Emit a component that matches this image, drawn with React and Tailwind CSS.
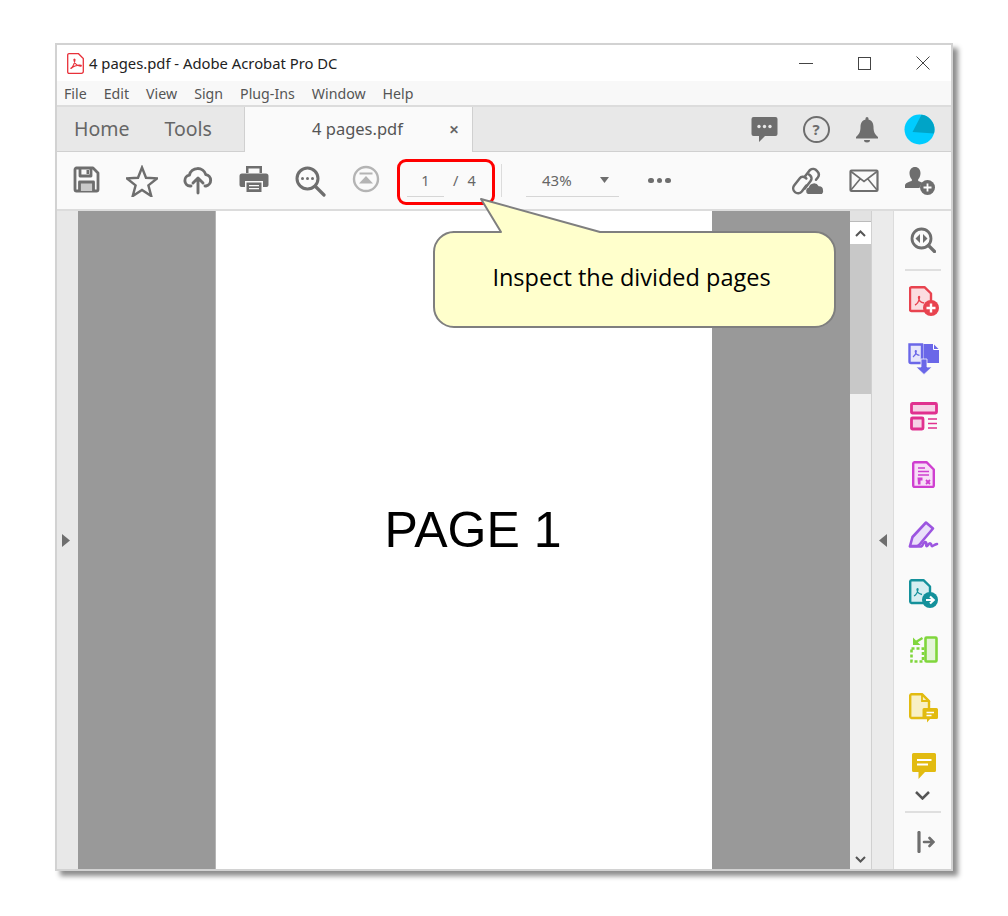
import React from 'react';

const gray = '#6e6e6e';

// toolbar icons
const Save = () => (
  <svg width="28" height="28" viewBox="0 0 28 28" fill="none" stroke={gray} strokeWidth="2.8" strokeLinejoin="round">
    <path d="M3 4.5a1.5 1.5 0 0 1 1.5-1.5H21l5 5v16.5a1.5 1.5 0 0 1-1.5 1.5h-20A1.5 1.5 0 0 1 3 24.5z" />
    <path d="M8 3v8h11V3" />
    <path d="M7.5 26v-9h14v9" fill="#c9c9c9" />
    <rect x="14.5" y="5" width="2.5" height="4" fill={gray} stroke="none" />
  </svg>
);
const Star = () => (
  <svg width="32" height="32" viewBox="0 0 32 32" fill="none" stroke={gray} strokeWidth="2.4" strokeLinejoin="miter">
    <path d="M16 2.5l4 10.3 11 .6-8.6 7 2.9 10.7L16 25l-9.3 6.1 2.9-10.7-8.6-7 11-.6z" />
  </svg>
);
const Upload = () => (
  <svg width="30" height="30" viewBox="0 0 30 30" fill="none" stroke={gray} strokeWidth="2.9" strokeLinecap="round" strokeLinejoin="round">
    <path d="M8 21H7a5.5 5.5 0 0 1-.6-10.9A8.5 8.5 0 0 1 22.8 9.6 5.8 5.8 0 0 1 23 21h-1" />
    <path d="M15 28V13.5M10 18l5-5 5 5" />
  </svg>
);
const Printer = () => (
  <svg width="30" height="28" viewBox="0 0 30 28" fill={gray}>
    <path d="M7 1h16v7h-2.5V3.5h-11V8H7z" />
    <path d="M3 8.5h24a2.5 2.5 0 0 1 2.5 2.5v9a2 2 0 0 1-2 2H24v-6H6v6H2.5a2 2 0 0 1-2-2v-9A2.5 2.5 0 0 1 3 8.5z" />
    <path d="M7.5 17.5h15V27h-15zM10 20v1.3h10V20zm0 3v1.3h10V23z" fillRule="evenodd" />
  </svg>
);
const ZoomDots = () => (
  <svg width="32" height="32" viewBox="0 0 32 32" fill="none" stroke={gray} strokeWidth="3" strokeLinecap="round">
    <circle cx="13.5" cy="13.5" r="10.5" />
    <path d="M21.5 21.5L30 30" strokeWidth="3.2" />
    <circle cx="8.5" cy="13.5" r="1.5" fill={gray} stroke="none" />
    <circle cx="13.5" cy="13.5" r="1.5" fill={gray} stroke="none" />
    <circle cx="18.5" cy="13.5" r="1.5" fill={gray} stroke="none" />
  </svg>
);
const ScrollTop = () => (
  <svg width="28" height="28" viewBox="0 0 28 28" fill="none">
    <circle cx="14" cy="14" r="12" stroke="#b4b4b4" strokeWidth="2.4" />
    <rect x="7.5" y="7.5" width="13" height="2" fill="#b4b4b4" />
    <path d="M14 11l7 7.5H7z" fill="#b4b4b4" />
  </svg>
);
const LinkCloud = () => (
  <svg width="32" height="30" viewBox="0 0 32 30" fill="none" stroke={gray} strokeWidth="2.5" strokeLinecap="round">
    <path d="M12.5 11l5.5-7a5 5 0 0 1 7 1l.3.3a4.8 4.8 0 0 1 .5 6.2l-1.8 2.2" />
    <path d="M17 8.5l1.2 1a4 4 0 0 1 .4 5.5l-5.8 7.5" />
    <path d="M14.3 19.5L9.8 25.5a4.8 4.8 0 0 1-6.8.6 5 5 0 0 1-.7-6.9l5.5-7a4 4 0 0 1 5.5-.6l1 .8" />
    <path d="M16 28a3.5 3.5 0 0 1 .8-6.5 5.3 5.3 0 0 1 9.9-1.2A4 4 0 0 1 31 24a3.9 3.9 0 0 1-1 4z" fill={gray} stroke="none" />
  </svg>
);
const Mail = () => (
  <svg width="30" height="24" viewBox="0 0 30 24" fill="none" stroke={gray} strokeWidth="2.2">
    <rect x="1.5" y="1.5" width="27" height="20.5" rx="1" />
    <path d="M2 2.5l13 10 13-10M2 21l9.5-11.5M28 21l-9.5-11.5" strokeWidth="1.6" />
  </svg>
);
const UserPlus = () => (
  <svg width="32" height="30" viewBox="0 0 32 30" fill={gray}>
    <path d="M11 1c3.3 0 5.5 2.7 5.5 6.2 0 2.6-1 4.7-2.3 6v1.8c2 .6 3.3 1.2 4.3 2a8.5 8.5 0 0 0-3 5H1v-2.5c0-2.3 3.5-3.7 6.8-4.5v-1.8C6.5 11.9 5.5 9.8 5.5 7.2 5.5 3.7 7.7 1 11 1z" />
    <circle cx="23.5" cy="21.5" r="7.5" />
    <path d="M23.5 17.5v8M19.5 21.5h8" stroke="#fff" strokeWidth="1.8" />
  </svg>
);
const Comment = () => (
  <svg width="27" height="27" viewBox="0 0 27 27" fill={gray}>
    <path d="M2.5 1h22A2 2 0 0 1 26.5 3v15a2 2 0 0 1-2 2H14l-6 6v-6H2.5a2 2 0 0 1-2-2V3a2 2 0 0 1 2-2z" />
    <circle cx="8" cy="10.5" r="1.7" fill="#e8e8e8" />
    <circle cx="13.5" cy="10.5" r="1.7" fill="#e8e8e8" />
    <circle cx="19" cy="10.5" r="1.7" fill="#e8e8e8" />
  </svg>
);
const Bell = () => (
  <svg width="24" height="27" viewBox="0 0 24 27" fill={gray}>
    <path d="M10.5 2.5a1.5 1.5 0 0 1 3 0v1C17 4.3 18.5 7.3 18.5 11c0 5 1.5 7.5 4.5 10v1.5H1V21c3-2.5 4.5-5 4.5-10 0-3.7 1.5-6.7 5-7.5z" />
    <path d="M9 24h6a3 2.5 0 0 1-6 0z" />
  </svg>
);
const Avatar = () => (
  <svg width="31" height="31" viewBox="0 0 31 31">
    <circle cx="15.5" cy="15.5" r="15" fill="#00ccff" />
    <path d="M8.5 18L17.5 .7A15 15 0 0 1 30.5 15.5 15 15 0 0 1 30 19.5z" fill="#00a4c7" />
  </svg>
);
const PdfFile = () => (
  <svg width="17" height="21" viewBox="0 0 17 21" fill="none" stroke="#e8313a" strokeWidth="1.3">
    <path d="M2 .7h9.5L16.3 5.5V18.5a1.8 1.8 0 0 1-1.8 1.8H2A1.3 1.3 0 0 1 .7 19V2A1.3 1.3 0 0 1 2 .7z" />
    <path d="M3.5 15.5c2-1 4.2-5 4.5-8.5.1-1.3-1.2-1.3-1.1 0 .3 3 3 6 6.5 6.3 1.3.1 1.3-1.2 0-1.2-3-.1-7 1.2-9.4 3.4z" strokeWidth="1.1" />
  </svg>
);

// right rail icons
const InspectZoom = () => (
  <svg width="26" height="26" viewBox="0 0 26 26" fill="none" stroke={gray} strokeWidth="2.8" strokeLinecap="round">
    <circle cx="11.5" cy="11.5" r="9.5" />
    <path d="M18.5 18.5L24.5 24.5" strokeWidth="3.2" />
    <path d="M10 7l-4.5 4.5L10 16zM13 7l4.5 4.5L13 16z" fill={gray} stroke="none" />
  </svg>
);
const CreatePdf = () => (
  <svg width="30" height="30" viewBox="0 0 30 30" fill="none">
    <path d="M2.5 1.2h13L22 7.5V25H2.5a1.5 1.5 0 0 1-1.5-1.5v-21A1.5 1.5 0 0 1 2.5 1.2z" fill="#fbdde0" stroke="#e8434f" strokeWidth="2.4" strokeLinejoin="round" />
    <path d="M6 19c2-1 4-4 4.500-7.500.2-1.500-1-1.500-1 0 .2 3 2.500 5 5.500 5.500" stroke="#e8434f" strokeWidth="1.4" />
    <circle cx="22" cy="22" r="8" fill="#e8434f" />
    <path d="M22 17.5v9M17.5 22h9" stroke="#fff" strokeWidth="2.4" />
  </svg>
);
const CombinePdf = () => (
  <svg width="32" height="32" viewBox="0 0 32 32" fill="none">
    <path d="M1.5 1.5h12.5v18.5H3a1.5 1.5 0 0 1-1.5-1.5z" fill="#e6e6fb" stroke="#6a67e8" strokeWidth="2.4" />
    <path d="M15.5 1h10L31 6.5V20H15.5z" fill="#6a67e8" />
    <path d="M25.5 1v5.5H31" stroke="#fff" strokeWidth="1" />
    <path d="M5 14c1.5-1 3-3 3.3-5.5 0-1-1-1-1 0 .2 2 2 3.5 4.2 3.8" stroke="#6a67e8" strokeWidth="1.3" />
    <path d="M13 16h6v8h5l-8 7.5L8 24h5z" fill="#6a67e8" stroke="#fafafa" strokeWidth=".8" />
  </svg>
);
const Organize = () => (
  <svg width="28" height="29" viewBox="0 0 28 29" fill="none" stroke="#e0318f" strokeWidth="2.8">
    <rect x="1.5" y="1.5" width="25" height="9.5" rx="1" fill="#f6d2e6" />
    <rect x="1.5" y="16" width="11.5" height="11" rx="1" fill="#f6d2e6" />
    <path d="M18 17h9M18 21.5h9M18 26h9" strokeWidth="1.6" />
  </svg>
);
const FillForm = () => (
  <svg width="23" height="27" viewBox="0 0 23 27" fill="none" stroke="#cf3fd0">
    <path d="M2.5 1.2h12L21.8 8.5V24.5a1.5 1.5 0 0 1-1.5 1.5H2.500A1.500 1.500 0 0 1 1.200 24.500v-22A1.500 1.500 0 0 1 2.500 1.200z" fill="#f7dff7" strokeWidth="2.4" strokeLinejoin="round" />
    <path d="M6 7h7M6 10.5h11M6 14h11" strokeWidth="1.4" />
    <path d="M5.5 16.5h5v3H8.5V23.5H6z" fill="#cf3fd0" stroke="none" />
    <path d="M14 19l4 4M18 19l-4 4" strokeWidth="1.8" />
  </svg>
);
const Sign = () => (
  <svg width="31" height="29" viewBox="0 0 31 29" fill="none" stroke="#9c55e0" strokeLinecap="round" strokeLinejoin="round">
    <path d="M2 26l2.5-9L18 2.5l7 6-11 13c-1 1.5-3 4.5-5.5 4.5z" fill="#eadffa" strokeWidth="2.6" />
    <path d="M2 26.5h11" strokeWidth="2.6" />
    <path d="M14 26c1.5-3 3-5 4-3.5s-.5 4 1 3.5 2-3.5 3.5-2.5.5 3 2 2.5 2-1.5 4.5-2" strokeWidth="2.6" />
  </svg>
);
const ExportPdf = () => (
  <svg width="29" height="29" viewBox="0 0 29 29" fill="none">
    <path d="M2.5 1.2h12L21 7.5V24H2.5A1.5 1.5 0 0 1 1.2 22.5v-20A1.5 1.5 0 0 1 2.5 1.2z" fill="#d6eef1" stroke="#14919b" strokeWidth="2.4" strokeLinejoin="round" />
    <path d="M5 17c2-1 3.5-3.5 4-6.5.2-1.3-1-1.3-1 0 .2 2.5 2.5 4.5 5 5" stroke="#14919b" strokeWidth="1.3" />
    <circle cx="21" cy="21" r="8" fill="#14919b" />
    <path d="M17 21h7M21 17.5l3.7 3.5-3.7 3.5" stroke="#fff" strokeWidth="2.2" />
  </svg>
);
const SendBack = () => (
  <svg width="28" height="27" viewBox="0 0 28 27" fill="none" stroke="#80d63c">
    <rect x="15.5" y="1.5" width="11" height="24" rx="1" fill="#e4f5d8" strokeWidth="2.6" />
    <rect x="1.5" y="12.5" width="11.5" height="13" strokeWidth="2.6" strokeDasharray="3 2" />
    <path d="M3 1.5v7.5h7.5z" fill="#80d63c" stroke="none" />
    <path d="M6 6l6.5-4" strokeWidth="2.4" />
  </svg>
);
const ReviewFile = () => (
  <svg width="29" height="30" viewBox="0 0 29 30" fill="none">
    <path d="M2.5 1.2h10.5L20 8v17H2.5A1.5 1.5 0 0 1 1.2 23.5v-21A1.5 1.5 0 0 1 2.5 1.2z" fill="#f8f0c4" stroke="#e2bb10" strokeWidth="2.4" strokeLinejoin="round" />
    <path d="M13 1.5V8h6.5z" fill="#f8f0c4" stroke="#e2bb10" strokeWidth="1.8" />
    <path d="M15 15h12.5a1.5 1.5 0 0 1 1.5 1.5v8a1.5 1.5 0 0 1-1.5 1.5H21l-3 3.5V26h-3a1.5 1.5 0 0 1-1.5-1.5v-8A1.5 1.5 0 0 1 15 15z" fill="#e2bb10" />
    <path d="M17.5 19.5h7.5M17.5 22.5h5" stroke="#fff" strokeWidth="1.3" />
  </svg>
);
const Note = () => (
  <svg width="26" height="28" viewBox="0 0 26 28" fill="#e2bb10">
    <path d="M2.5 1h21A1.5 1.5 0 0 1 25 2.5v16a1.5 1.5 0 0 1-1.5 1.5H14l-6.5 7v-7h-5A1.5 1.5 0 0 1 1 18.5v-16A1.5 1.5 0 0 1 2.5 1z" />
    <path d="M6 8h14.5M6 12.5h11" stroke="#fff" strokeWidth="1.8" />
  </svg>
);

const menus = ['File', 'Edit', 'View', 'Sign', 'Plug-Ins', 'Window', 'Help'];
const toolLeft = [Save, Star, Upload, Printer, ZoomDots, ScrollTop];
const railTools = [
  { Icon: CreatePdf, cls: 'h-[59px]' },
  { Icon: CombinePdf, cls: 'h-[57px]' },
  { Icon: Organize, cls: 'h-[58px]' },
  { Icon: FillForm, cls: 'h-[59px]' },
  { Icon: Sign, cls: 'h-[60px]' },
  { Icon: ExportPdf, cls: 'h-[58px]' },
  { Icon: SendBack, cls: 'h-[54px]' },
  { Icon: ReviewFile, cls: 'h-[64px]' },
  { Icon: Note, cls: 'h-[51px]' },
];

export default function App() {
  return (
    <div className="relative w-[1008px] h-[916px] bg-white pl-[55px] pt-[43px] font-['Noto_Sans',sans-serif] overflow-hidden">
      {/* window */}
      <div className="w-[898px] h-[828px] border-2 border-[#d2d2d2] bg-white flex flex-col shadow-[5px_5px_5px_rgba(0,0,0,0.45)]">
        {/* title bar */}
        <div className="h-[36px] shrink-0 flex items-center pl-[10px] bg-white">
          <PdfFile />
          <span className="ml-[5px] text-[14.8px] text-[#222]">4 pages.pdf - Adobe Acrobat Pro DC</span>
          <div className="ml-auto flex items-center pr-[21px] gap-[45px]">
            <div className="w-[14px] h-px bg-[#444]" />
            <div className="w-[13px] h-[13px] border border-[#444]" />
            <svg width="14" height="14" viewBox="0 0 14 14" stroke="#444" strokeWidth="1"><path d="M.5.5l13 13M13.5.5l-13 13" /></svg>
          </div>
        </div>

        {/* menu bar */}
        <div className="h-[26px] shrink-0 flex items-center pl-[7px] pt-[1px] gap-[17px] bg-[#f8f8f8] border-b-2 border-[#dcdcdc] text-[14.2px] text-[#555]">
          {menus.map(m => <span key={m}>{m}</span>)}
        </div>

        {/* tabs */}
        <div className="h-[45px] shrink-0 flex bg-[#e8e8e8] border-b border-[#d0d0d0]">
          <div className="w-[187px] flex items-center pl-[17px] gap-[35px] text-[19.5px] text-[#666]">
            <span>Home</span>
            <span>Tools</span>
          </div>
          <div className="w-[229px] h-[45px] flex items-center bg-[#fafafa] border-x border-[#d0d0d0] text-[16.5px] text-[#555]">
            <span className="ml-[67px]">4 pages.pdf</span>
            <span className="ml-[46px] text-[12px] font-bold text-[#666]">✕</span>
          </div>
          <div className="ml-auto flex items-center pr-[5px]">
            <div className="w-[52px] flex justify-center"><Comment /></div>
            <div className="w-[52px] flex justify-center">
              <div className="w-[27px] h-[27px] rounded-full border-[2.5px] border-[#6e6e6e] flex items-center justify-center text-[15px] font-bold text-[#6e6e6e]">?</div>
            </div>
            <div className="w-[50px] flex justify-center"><Bell /></div>
            <div className="w-[54px] flex justify-center"><Avatar /></div>
          </div>
        </div>

        {/* toolbar */}
        <div className="h-[59px] shrink-0 flex items-center bg-[#fafafa] border-b-2 border-[#dcdcdc] text-[#666]">
          <div className="flex pl-[1px]">
            {toolLeft.map((Icon, i) => (
              <div key={i} className="w-[56px] flex justify-center"><Icon /></div>
            ))}
          </div>
          <div className="w-[142px] h-full flex items-center pl-[13px] text-[14.5px]">
            <div className="w-[37px] text-center border-b border-[#d6d6d6] h-[33px] leading-[33px]">1</div>
            <span className="ml-[9px]">/</span>
            <span className="ml-[9px]">4</span>
            <div className="ml-[25px] w-px h-[33px] bg-[#dcdcdc]" />
          </div>
          <div className="w-[93px] h-[33px] ml-[-10px] flex items-center border-b border-[#d6d6d6] text-[15px] pl-[16px]">
            <span>43%</span>
            <svg className="ml-[28px]" width="9" height="6" viewBox="0 0 9 6" fill={gray}><path d="M0 0h9L4.5 6z" /></svg>
          </div>
          <div className="ml-[29px] flex gap-[3px]">
            <div className="w-[5.5px] h-[5.5px] rounded-full bg-[#6e6e6e]" />
            <div className="w-[5.5px] h-[5.5px] rounded-full bg-[#6e6e6e]" />
            <div className="w-[5.5px] h-[5.5px] rounded-full bg-[#6e6e6e]" />
          </div>
          <div className="ml-auto flex items-center pr-[3px]">
            <div className="w-[56px] flex justify-center"><LinkCloud /></div>
            <div className="w-[56px] flex justify-center"><Mail /></div>
            <div className="w-[56px] flex justify-center"><UserPlus /></div>
          </div>
        </div>

        {/* body */}
        <div className="flex-1 min-h-0 flex">
          <div className="w-[21px] shrink-0 bg-[#e8e8e8] flex items-center justify-center pr-[3px]">
            <svg width="8" height="13" viewBox="0 0 8 13" fill={gray}><path d="M0 0l8 6.5L0 13z" /></svg>
          </div>
          <div className="flex-1 flex bg-[#999999]">
            <div className="w-[497px] ml-[137px] bg-white border-l border-[#b5b5b5] flex items-center justify-center pb-[19px]">
              <span className="font-['Liberation_Sans',sans-serif] text-[50px] text-black ml-[18px]">PAGE 1</span>
            </div>
          </div>

          {/* scrollbar */}
          <div className="w-[22px] shrink-0 flex flex-col bg-[#f0f0f0] border-r border-[#d0d0d0]">
            <div className="h-[11px] bg-[#e2e2e2] border-b border-[#bbb]" />
            <div className="h-[22px] bg-white flex items-center justify-center">
              <svg width="11" height="7" viewBox="0 0 11 7" fill="none" stroke="#555" strokeWidth="2"><path d="M1 6l4.5-4.5L10 6" /></svg>
            </div>
            <div className="h-[150px] bg-[#c8c8c8]" />
            <div className="mt-auto h-[20px] flex items-center justify-center">
              <svg width="11" height="7" viewBox="0 0 11 7" fill="none" stroke="#555" strokeWidth="2"><path d="M1 1l4.5 4.5L10 1" /></svg>
            </div>
          </div>

          {/* panel handle */}
          <div className="w-[22px] shrink-0 bg-[#ebebeb] border-r border-[#dcdcdc] flex items-center justify-center">
            <svg width="8" height="13" viewBox="0 0 8 13" fill={gray}><path d="M8 0L0 6.5 8 13z" /></svg>
          </div>

          {/* right tool rail */}
          <div className="w-[57px] shrink-0 bg-[#fafafa] flex flex-col items-center">
            <div className="h-[58px] flex items-center justify-center pl-[1px]"><InspectZoom /></div>
            <div className="w-[36px] h-[2px] bg-[#dfdfdf]" />
            {railTools.map(({ Icon, cls }, i) => (
              <div key={i} className={`${cls} flex items-center justify-center pl-[2px]`}><Icon /></div>
            ))}
            <svg width="15" height="9" viewBox="0 0 15 9" fill="none" stroke="#555" strokeWidth="2.5"><path d="M1 1l6.5 6.5L14 1" /></svg>
            <div className="w-[36px] h-[2px] bg-[#dfdfdf] mt-[11px]" />
            <svg className="mt-[18px] ml-[7px]" width="18" height="22" viewBox="0 0 18 22" fill="none" stroke={gray} strokeLinecap="round">
              <path d="M2 1.5v19" strokeWidth="3.2" />
              <path d="M7 11h9M12.5 7l4 4-4 4" strokeWidth="2.6" />
            </svg>
          </div>
        </div>
      </div>

      {/* red highlight over the page box */}
      <div className="absolute left-[397px] top-[159px] w-[98px] h-[46px] border-[3px] border-[#ff0000] rounded-[9px]" />

      {/* callout */}
      <svg className="absolute left-0 top-0" width="1008" height="916" fill="none">
        <path
          d="M453 232H501L481 199L600 232H815a20 20 0 0 1 20 20v55a20 20 0 0 1-20 20H454a20 20 0 0 1-20-20v-55a20 20 0 0 1 20-20z"
          fill="#ffffcc"
          stroke="#7f7f7f"
          strokeWidth="2"
          strokeLinejoin="round"
        />
      </svg>
      <div className="absolute left-[434px] top-[232px] w-[401px] h-[95px] flex items-center justify-center pb-[3px] pr-[6px] text-[23.5px] text-black font-['Open_Sans',sans-serif]">
        Inspect the divided pages
      </div>
    </div>
  );
}
